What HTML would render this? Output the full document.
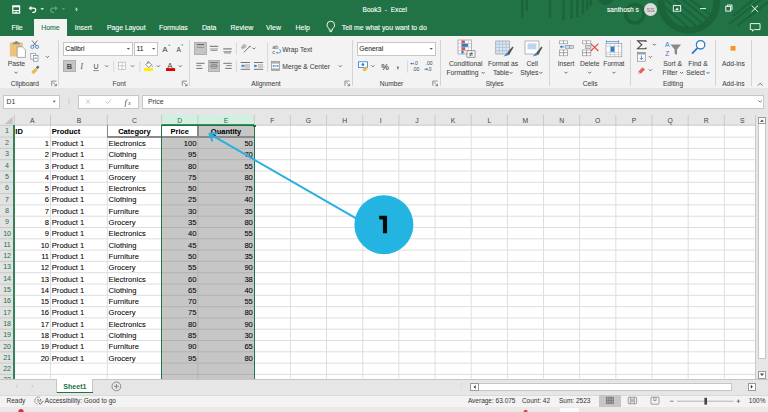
<!DOCTYPE html>
<html><head><meta charset="utf-8">
<style>
*{margin:0;padding:0;box-sizing:border-box}
html,body{width:768px;height:412px;overflow:hidden;background:#fff;font-family:"Liberation Sans",sans-serif;color:#262626}
.a{position:absolute;white-space:nowrap}
svg{position:absolute;overflow:visible}
#title{position:absolute;left:0;top:0;width:768px;height:36px;background:#217346;overflow:hidden}
.tt{position:absolute;color:#fff;font-size:6.9px;white-space:nowrap;line-height:8px;-webkit-text-stroke:0.1px currentColor}
#ribbon{position:absolute;left:0;top:36px;width:768px;height:52px;background:#f3f3f3}
.rl{position:absolute;font-size:6.6px;color:#333;white-space:nowrap;line-height:8px;-webkit-text-stroke:0.05px currentColor}
.sep{position:absolute;top:40px;width:1px;height:46px;background:#d4d4d4}
#fbar{position:absolute;left:0;top:88px;width:768px;height:27px;background:#e6e6e6}
#grid{position:absolute;left:0;top:0;width:768px;height:412px;overflow:hidden}
#tabs{position:absolute;left:0;top:379px;width:768px;height:16px;background:#e6e6e6}
#status{position:absolute;left:0;top:395px;width:768px;height:12px;background:#f3f3f3}
#task{position:absolute;left:0;top:407px;width:768px;height:5px;background:#efe9e7}
.c{position:absolute;font-size:7.6px;color:#000;white-space:nowrap;line-height:11px;-webkit-text-stroke:0.06px #000}
.st{position:absolute;font-size:6.5px;color:#333;white-space:nowrap;line-height:8px}
</style></head><body>
<div id="title">
<svg style="left:0;top:0" width="768" height="36">
<g fill="none" stroke="#1b633a">
<circle cx="688.8" cy="2.5" r="27.8" stroke-width="6.8"/>
<circle cx="634.8" cy="13.7" r="9.2" stroke-width="3.6"/>
</g>
<circle cx="605.7" cy="-3" r="8" fill="#1b633a"/>
<g stroke="#1b633a" stroke-width="2.2">
<line x1="522.3" y1="0" x2="522.3" y2="18"/><line x1="526.8" y1="0" x2="526.8" y2="11"/>
<line x1="550" y1="0" x2="550" y2="18"/><line x1="563.5" y1="0" x2="563.5" y2="20"/>
<line x1="571.5" y1="0" x2="571.5" y2="19"/><line x1="577.3" y1="0" x2="577.3" y2="17"/>
<line x1="583" y1="0" x2="583" y2="14"/><line x1="587.3" y1="0" x2="587.3" y2="10"/><line x1="590.8" y1="0" x2="590.8" y2="6"/>
</g>
<g stroke="#1b633a" stroke-width="2">
<line x1="729" y1="24" x2="768" y2="-6"/><line x1="737" y1="26" x2="776" y2="-4"/><line x1="733" y1="16" x2="760" y2="-6"/>
<line x1="661" y1="4" x2="689" y2="28"/><line x1="666" y1="0" x2="696" y2="26"/><line x1="671" y1="-3" x2="702" y2="23"/><line x1="677" y1="-5" x2="708" y2="20"/><line x1="683" y1="-6" x2="712" y2="16"/>
</g>
</svg>
<svg style="left:0;top:0" width="120" height="20">
<g fill="none" stroke="#fff" stroke-width="1.2">
<rect x="12.8" y="6" width="6.8" height="7.1"/>
<path d="M13.4 10.6 H19"/>
</g>
<rect x="12.8" y="5.6" width="6.8" height="1.7" fill="#fff"/>
<rect x="15.2" y="11.8" width="2" height="1.6" fill="#fff"/>
<g fill="none" stroke="#fff" stroke-width="1.3" stroke-linecap="round">
<path d="M30.4 8.2 H33.6 A2.1 2.1 0 0 1 33.6 12.4 H32.8"/>
</g>
<path d="M28.6 8.2 L31.4 5.9 V10.5 Z" fill="#fff"/>
<path d="M40.4 8.3 H44 L42.2 9.9 Z" fill="#fff"/>
<g fill="none" stroke="#64a07d" stroke-width="1.2" stroke-linecap="round">
<path d="M56 8.2 H52.8 A2.1 2.1 0 0 0 52.8 12.4 H53.6"/>
</g>
<path d="M57.8 8.2 L55 5.9 V10.5 Z" fill="#64a07d"/>
<path d="M61.6 8.3 H65.2 L63.4 9.9 Z" fill="#64a07d"/>
<rect x="75.7" y="7.8" width="1.5" height="0.9" fill="#fff"/>
<path d="M75 9.6 H78 L76.5 11.1 Z" fill="#fff"/>
</svg>
<div class="tt" style="left:362.5px;top:6.4px;font-size:6.6px">Book3&nbsp; -&nbsp; Excel</div>
<div class="tt" style="left:607px;top:6.3px;font-size:6.6px">santhosh s</div>
<div class="a" style="left:644.1px;top:2.8px;width:13px;height:13px;border-radius:50%;background:#dcdcdc;color:#7a7a7a;font-size:6.2px;line-height:13px;text-align:center">SS</div>
<svg style="left:0;top:0" width="768" height="36">
<g fill="none" stroke="#fff" stroke-width="0.9">
<rect x="673.3" y="5.6" width="7.4" height="5.6"/>
<line x1="700" y1="8.6" x2="706" y2="8.6"/>
<rect x="725.8" y="6.3" width="4.8" height="4.8"/>
<path d="M727.2 6.3 V5 H732 V9.8 H730.6"/>
<line x1="751.6" y1="5.5" x2="758" y2="11.9"/><line x1="758" y1="5.5" x2="751.6" y2="11.9"/>
<path d="M750.3 23.6 H760 V29.6 H754.2 L752.5 31.2 V29.6 H750.3 Z"/>
</g>
<path d="M675.3 10 L677 7.6 L678.7 10 Z" fill="#fff"/>
</svg>
<div class="a" style="left:34.4px;top:19px;width:32.8px;height:17px;background:#f3f3f3"></div>
<div class="tt" style="left:11.5px;top:24.2px;color:#fff">File</div>
<div class="tt" style="left:41.2px;top:24.2px;color:#217346">Home</div>
<div class="tt" style="left:74.8px;top:24.2px;color:#fff">Insert</div>
<div class="tt" style="left:106.9px;top:24.2px;color:#fff">Page Layout</div>
<div class="tt" style="left:159px;top:24.2px;color:#fff">Formulas</div>
<div class="tt" style="left:201.9px;top:24.2px;color:#fff">Data</div>
<div class="tt" style="left:230.6px;top:24.2px;color:#fff">Review</div>
<div class="tt" style="left:266.1px;top:24.2px;color:#fff">View</div>
<div class="tt" style="left:295.6px;top:24.2px;color:#fff">Help</div>
<div class="tt" style="left:341.7px;top:24.2px;color:#fff">Tell me what you want to do</div>
<svg style="left:0;top:0" width="768" height="36">
<g fill="none" stroke="#fff" stroke-width="0.9">
<path d="M329.2 30.2 V28.6 C327.6 27.6 327 26.4 327 25 A3.8 3.8 0 0 1 334.6 25 C334.6 26.4 334 27.6 332.4 28.6 V30.2 Z"/>
<line x1="329.6" y1="31.6" x2="332" y2="31.6"/>
</g></svg>
</div><div id="ribbon"></div><div id="ribbon"></div>
<div class="sep" style="left:58px"></div>
<div class="sep" style="left:189px"></div>
<div class="sep" style="left:352px"></div>
<div class="sep" style="left:440px"></div>
<div class="sep" style="left:549px"></div>
<div class="sep" style="left:630px"></div>
<div class="sep" style="left:715px"></div>
<div class="sep" style="left:751px"></div>
<div class="rl" style="left:-5.2px;top:79.8px;width:60px;text-align:center;font-size:6.6px;color:#444">Clipboard</div>
<div class="rl" style="left:89.2px;top:79.8px;width:60px;text-align:center;font-size:6.6px;color:#444">Font</div>
<div class="rl" style="left:236px;top:79.8px;width:60px;text-align:center;font-size:6.6px;color:#444">Alignment</div>
<div class="rl" style="left:361.6px;top:79.8px;width:60px;text-align:center;font-size:6.6px;color:#444">Number</div>
<div class="rl" style="left:464.7px;top:79.8px;width:60px;text-align:center;font-size:6.6px;color:#444">Styles</div>
<div class="rl" style="left:560.2px;top:79.8px;width:60px;text-align:center;font-size:6.6px;color:#444">Cells</div>
<div class="rl" style="left:643px;top:79.8px;width:60px;text-align:center;font-size:6.6px;color:#444">Editing</div>
<div class="rl" style="left:703.4px;top:79.8px;width:60px;text-align:center;font-size:6.6px;color:#444">Add-ins</div>
<div class="a" style="left:63.2px;top:42.2px;width:69.4px;height:13.4px;background:#fff;border:1px solid #c6c6c6"></div>
<div class="a" style="left:134.3px;top:42.2px;width:23.6px;height:13.4px;background:#fff;border:1px solid #c6c6c6"></div>
<div class="a" style="left:357.3px;top:42.2px;width:78.4px;height:13.4px;background:#fff;border:1px solid #c6c6c6"></div>
<div class="rl" style="left:65.3px;top:44.8px;font-size:6.8px;color:#262626">Calibri</div>
<div class="rl" style="left:136.4px;top:44.8px;font-size:6.8px;color:#262626">11</div>
<div class="rl" style="left:359.2px;top:44.8px;font-size:6.8px;color:#262626">General</div>
<div class="a" style="left:63.2px;top:59.7px;width:12.5px;height:12.8px;background:#c5c5c5;border:1px solid #b0b0b0"></div>
<div class="a" style="left:194.1px;top:42.4px;width:12.5px;height:12.8px;background:#c5c5c5;border:1px solid #b0b0b0"></div>
<div class="a" style="left:207.8px;top:59.7px;width:12.5px;height:12.8px;background:#c5c5c5;border:1px solid #b0b0b0"></div>
<div class="rl" style="left:-13.6px;top:59.8px;width:60px;text-align:center;font-size:6.8px;color:#444">Paste</div>
<div class="rl" style="left:282.3px;top:46px;font-size:6.7px;color:#444">Wrap Text</div>
<div class="rl" style="left:282.3px;top:63.2px;font-size:6.75px;color:#444">Merge &amp; Center</div>
<div class="rl" style="left:435.7px;top:59.7px;width:60px;text-align:center;font-size:6.7px;color:#444">Conditional</div>
<div class="rl" style="left:446.4px;top:68.6px;font-size:6.7px;color:#444">Formatting</div>
<div class="rl" style="left:473.1px;top:59.7px;width:60px;text-align:center;font-size:6.7px;color:#444">Format as</div>
<div class="rl" style="left:492.9px;top:68.6px;font-size:6.7px;color:#444">Table</div>
<div class="rl" style="left:502.2px;top:59.7px;width:60px;text-align:center;font-size:6.7px;color:#444">Cell</div>
<div class="rl" style="left:520.2px;top:68.6px;font-size:6.7px;color:#444">Styles</div>
<div class="rl" style="left:642.6px;top:59.7px;width:60px;text-align:center;font-size:6.7px;color:#444">Sort &amp;</div>
<div class="rl" style="left:662.6px;top:68.6px;font-size:6.7px;color:#444">Filter</div>
<div class="rl" style="left:668px;top:59.7px;width:60px;text-align:center;font-size:6.7px;color:#444">Find &amp;</div>
<div class="rl" style="left:686.3px;top:68.6px;font-size:6.7px;color:#444">Select</div>
<div class="rl" style="left:536px;top:59.7px;width:60px;text-align:center;font-size:6.7px;color:#444">Insert</div>
<div class="rl" style="left:559.7px;top:59.7px;width:60px;text-align:center;font-size:6.7px;color:#444">Delete</div>
<div class="rl" style="left:583.9px;top:59.7px;width:60px;text-align:center;font-size:6.7px;color:#444">Format</div>
<div class="rl" style="left:703.4px;top:59.7px;width:60px;text-align:center;font-size:6.7px;color:#444">Add-ins</div>
<svg style="left:0;top:0" width="768" height="90"><rect x="9.8" y="42.4" width="13" height="14" rx="0.5" fill="#efc27c"/><path d="M12.8 44.2 V42.6 H14.6 A1.7 1.7 0 0 1 18 42.6 H19.8 V44.2 Z" fill="#8a8a8a"/><path d="M17.2 46.8 H22.4 L25.4 49.8 V57.4 H17.2 Z" fill="#fff" stroke="#777" stroke-width="0.6"/><path d="M14.6 71.8 L16.1 73.3 L17.6 71.8" fill="none" stroke="#555" stroke-width="0.85"/><path d="M32 40.5 L36.6 46.2 M37.4 40.5 L32.8 46.2" stroke="#555" stroke-width="0.8" fill="none"/><circle cx="32.3" cy="46.9" r="1.6" fill="none" stroke="#2b7cd3" stroke-width="0.8"/><circle cx="37.1" cy="46.9" r="1.6" fill="none" stroke="#2b7cd3" stroke-width="0.8"/><rect x="30.8" y="53.4" width="4.6" height="5.8" fill="#fff" stroke="#777" stroke-width="0.6"/><rect x="33.4" y="55.4" width="4.6" height="5.8" fill="#fff" stroke="#777" stroke-width="0.6"/><path d="M34.3 58.2 H37" stroke="#2b7cd3" stroke-width="0.8"/><path d="M45.9 56.1 L47.4 57.6 L48.9 56.1" fill="none" stroke="#555" stroke-width="0.85"/><path d="M31.2 72 L35.2 68 L37.5 70.3 L33.5 74.3 Z" fill="#e8b84a"/><path d="M35.8 67.4 L38 65.6 L39.4 67 L37.6 69.2 Z" fill="#666"/><path d="M51.7 85.8 V81.1 H56.4" fill="none" stroke="#666" stroke-width="0.7"/><path d="M53 82.4 L56.4 85.8 M56.4 83.8 V85.8 H54.4" fill="none" stroke="#666" stroke-width="0.7"/><path d="M126.8 47.9 L130 47.9 L128.4 49.7 Z" fill="#555"/><path d="M152 47.9 L155.2 47.9 L153.6 49.7 Z" fill="#555"/><text x="162.2" y="52.2" font-size="8" fill="#444" font-family="Liberation Sans">A</text><path d="M168 45.6 L169.2 44.2 L170.4 45.6 Z" fill="#2b7cd3"/><text x="176.4" y="52.2" font-size="6.6" fill="#444" font-family="Liberation Sans">A</text><path d="M181 44.4 L182.2 45.8 L183.4 44.4 Z" fill="#2b7cd3"/><text x="66.8" y="69" font-size="7.4" font-weight="bold" fill="#444" font-family="Liberation Sans">B</text><text x="80.5" y="69" font-size="7.4" font-style="italic" fill="#444" font-family="Liberation Serif">I</text><text x="93.5" y="68.5" font-size="7" fill="#444" font-family="Liberation Sans">U</text><line x1="93.3" y1="70.6" x2="98.8" y2="70.6" stroke="#444" stroke-width="0.6"/><path d="M105.1 65.4 L106.6 66.9 L108.1 65.4" fill="none" stroke="#555" stroke-width="0.85"/><line x1="113.7" y1="61" x2="113.7" y2="72" stroke="#d0d0d0" stroke-width="0.8"/><line x1="139.8" y1="61" x2="139.8" y2="72" stroke="#d0d0d0" stroke-width="0.8"/><rect x="118.6" y="62.2" width="7" height="7.2" fill="#fff" stroke="#b4b4b4" stroke-width="0.7"/><path d="M122.1 62.2 V69.4 M118.6 65.8 H125.6" stroke="#b4b4b4" stroke-width="0.7"/><path d="M131 65.4 L132.5 66.9 L134 65.4" fill="none" stroke="#555" stroke-width="0.85"/><path d="M145.8 64.6 L148.6 61.8 L151.6 64.8 L148.8 67.6 Z" fill="#fff" stroke="#555" stroke-width="0.7"/><path d="M148 61.2 V64" stroke="#555" stroke-width="0.6"/><path d="M151.8 65 Q153.2 66.2 152.6 67.2 Q151.6 66.6 151.8 65 Z" fill="#2b7cd3"/><rect x="143.9" y="68.1" width="9" height="2.9" fill="#ffee00"/><path d="M156.9 65.4 L158.4 66.9 L159.9 65.4" fill="none" stroke="#555" stroke-width="0.85"/><text x="167.6" y="67.8" font-size="7.4" fill="#444" font-family="Liberation Sans">A</text><rect x="166" y="68.1" width="9.1" height="2.9" fill="#e00000"/><path d="M178.9 65.4 L180.4 66.9 L181.9 65.4" fill="none" stroke="#555" stroke-width="0.85"/><path d="M182.3 85.8 V81.1 H187" fill="none" stroke="#666" stroke-width="0.7"/><path d="M183.6 82.4 L187 85.8 M187 83.8 V85.8 H185" fill="none" stroke="#666" stroke-width="0.7"/><g stroke-width="0.9" fill="none"><path d="M196.8 44.6 H204.2" stroke="#555"/><path d="M196.8 47.4 H204.2" stroke="#8a8a8a"/><path d="M209.8 46.3 H218.1" stroke="#555"/><path d="M209.8 48.9 H218.1" stroke="#9a9a9a"/><path d="M210.6 50.3 H217.3" stroke="#777"/><path d="M223.3 48.9 H231.7" stroke="#555"/><path d="M223.3 51.5 H231.7" stroke="#9a9a9a"/><path d="M224 52.9 H231" stroke="#777"/><path d="M196.3 63.3 H204.6" stroke="#666"/><path d="M196.3 65.6 H201.5" stroke="#777"/><path d="M196.3 68.4 H202.6" stroke="#666"/><path d="M209.8 62.6 H218.1" stroke="#666"/><path d="M210.8 64.4 H217.1" stroke="#888"/><path d="M209.8 66.2 H218.1" stroke="#666"/><path d="M210.8 68.2 H217.1" stroke="#888"/><path d="M223.3 63.3 H231.7" stroke="#666"/><path d="M226.3 65.6 H231.7" stroke="#777"/><path d="M225 68.4 H231.7" stroke="#666"/><path d="M240.6 62.5 H250" stroke="#666"/><path d="M244.8 65 H250 M244.8 67 H250" stroke="#999"/><path d="M240.6 69.3 H250" stroke="#666"/><path d="M253.8 62.5 H263.2" stroke="#666"/><path d="M258 65 H263.2 M258 67 H263.2" stroke="#999"/><path d="M253.8 69.3 H263.2" stroke="#666"/></g><path d="M240.8 65.9 L243.4 64.2 V67.6 Z" fill="#2b7cd3"/><path d="M243 65.9 H245" stroke="#2b7cd3" stroke-width="1"/><path d="M257 65.9 L254.4 64.2 V67.6 Z" fill="#2b7cd3"/><path d="M254.4 65.9 H257" stroke="#2b7cd3" stroke-width="1"/><line x1="236.4" y1="42.7" x2="236.4" y2="54.7" stroke="#d0d0d0" stroke-width="0.8"/><line x1="236.4" y1="60.4" x2="236.4" y2="71.9" stroke="#d0d0d0" stroke-width="0.8"/><line x1="267.6" y1="42.5" x2="267.6" y2="72.5" stroke="#d0d0d0" stroke-width="0.8"/><text x="0" y="0" font-size="5.2" fill="#555" font-family="Liberation Sans" transform="translate(242.2 49.8) rotate(-40)">ab</text><path d="M243.8 52.4 L250.2 46" stroke="#555" stroke-width="0.8"/><path d="M250.4 45.8 L248.6 46.2 L250 47.6 Z" fill="#555"/><path d="M252.3 47.6 L253.8 49.1 L255.3 47.6" fill="none" stroke="#555" stroke-width="0.85"/><g font-family="Liberation Sans" font-size="5.6" fill="#555"><text x="272.2" y="48.6">ab</text><text x="272.2" y="53.6">c</text></g><path d="M279.2 49.6 A1.6 1.6 0 0 1 279.2 52.8 H276.6" fill="none" stroke="#2b7cd3" stroke-width="0.7"/><path d="M276 52.8 L277.4 51.8 V53.8 Z" fill="#2b7cd3"/><rect x="271.6" y="61.6" width="8" height="8.8" fill="#fff" stroke="#888" stroke-width="0.7"/><rect x="271.6" y="61.6" width="8" height="2" fill="#aaa"/><rect x="271.6" y="68.4" width="8" height="2" fill="#aaa"/><path d="M272.8 66 H278.4" stroke="#2b7cd3" stroke-width="0.8"/><path d="M272.4 66 L273.8 65 V67 Z M278.8 66 L277.4 65 V67 Z" fill="#2b7cd3"/><path d="M338.8 65.4 L340.3 66.9 L341.8 65.4" fill="none" stroke="#555" stroke-width="0.85"/><path d="M344.9 85.8 V81.1 H349.6" fill="none" stroke="#666" stroke-width="0.7"/><path d="M346.2 82.4 L349.6 85.8 M349.6 83.8 V85.8 H347.6" fill="none" stroke="#666" stroke-width="0.7"/><path d="M429.6 47.9 L432.8 47.9 L431.2 49.7 Z" fill="#555"/><rect x="358.4" y="61.8" width="9" height="5.6" fill="#fff" stroke="#2b7cd3" stroke-width="0.8"/><circle cx="362.9" cy="64.6" r="1.4" fill="#2b7cd3"/><circle cx="365.6" cy="68.4" r="1.8" fill="#e8b84a"/><circle cx="364.4" cy="69.6" r="1.6" fill="#e8b84a"/><path d="M371.3 65.4 L372.8 66.9 L374.3 65.4" fill="none" stroke="#555" stroke-width="0.85"/><text x="381.2" y="69.6" font-size="8.6" fill="#444" font-family="Liberation Sans" stroke="#444" stroke-width="0.15">%</text><text x="396.6" y="67.6" font-size="9" font-weight="bold" fill="#444" font-family="Liberation Sans">,</text><line x1="407.4" y1="60.5" x2="407.4" y2="72.5" stroke="#d0d0d0" stroke-width="0.8"/><g font-family="Liberation Sans" font-size="5" fill="#444"><text x="413.6" y="65.2">.0</text><text x="412.4" y="70.8">.00</text><text x="425.6" y="65.2">.00</text><text x="427.4" y="70.8">.0</text></g><path d="M410.6 63.6 H414" stroke="#2b7cd3" stroke-width="0.9"/><path d="M410.4 63.6 L412 62.4 V64.8 Z" fill="#2b7cd3"/><path d="M424.4 69.2 H427.6" stroke="#2b7cd3" stroke-width="0.9"/><path d="M428 69.2 L426.4 68 V70.4 Z" fill="#2b7cd3"/><path d="M432.8 85.8 V81.1 H437.5" fill="none" stroke="#666" stroke-width="0.7"/><path d="M434.1 82.4 L437.5 85.8 M437.5 83.8 V85.8 H435.5" fill="none" stroke="#666" stroke-width="0.7"/><rect x="458" y="40" width="13.6" height="14" fill="#fff" stroke="#888" stroke-width="0.6"/><path d="M458 43.5 H471.6 M458 47 H471.6 M458 50.5 H471.6 M461.5 40 V54 M465 40 V54 M468.3 40 V54" stroke="#aaa" stroke-width="0.5"/><rect x="461.6" y="40.4" width="3.2" height="3" fill="#e8524a"/><rect x="461.6" y="43.8" width="6.4" height="3" fill="#2b7cd3"/><rect x="461.6" y="47.2" width="3.6" height="3" fill="#e8524a"/><rect x="461.6" y="50.6" width="2" height="3" fill="#2b7cd3"/><rect x="467" y="50.8" width="8" height="6.4" fill="#fff" stroke="#555" stroke-width="0.6"/><path d="M469 53.4 H473 M469 55 H473 M470 56.4 L472 52" stroke="#333" stroke-width="0.6"/><rect x="495.8" y="41" width="13.6" height="13" fill="#dbe8f5" stroke="#888" stroke-width="0.6"/><path d="M495.8 44.2 H509.4 M495.8 47.4 H509.4 M495.8 50.6 H509.4 M499.2 41 V54 M502.6 41 V54 M506 41 V54" stroke="#9ab" stroke-width="0.5"/><path d="M503.5 56.5 L507 53 L509 55 Z" fill="#2b7cd3"/><path d="M507 53 L512.5 46.5 L513.5 47.5 L509 55 Z" fill="#555"/><rect x="525" y="41" width="14" height="13" fill="#fff" stroke="#888" stroke-width="0.6"/><rect x="527.5" y="43.4" width="9" height="6" fill="#bcd6ef"/><path d="M532.5 56.5 L536 53 L538 55 Z" fill="#2b7cd3"/><path d="M536 53 L541.5 46.5 L542.5 47.5 L538 55 Z" fill="#555"/><path d="M481.7 72 L483.2 73.5 L484.7 72" fill="none" stroke="#555" stroke-width="0.85"/><path d="M509.5 72 L511 73.5 L512.5 72" fill="none" stroke="#555" stroke-width="0.85"/><path d="M539.3 72 L540.8 73.5 L542.3 72" fill="none" stroke="#555" stroke-width="0.85"/><path d="M564.5 71.8 L566 73.3 L567.5 71.8" fill="none" stroke="#555" stroke-width="0.85"/><path d="M588.2 71.8 L589.7 73.3 L591.2 71.8" fill="none" stroke="#555" stroke-width="0.85"/><path d="M612.4 71.8 L613.9 73.3 L615.4 71.8" fill="none" stroke="#555" stroke-width="0.85"/><path d="M680.1 72 L681.6 73.5 L683.1 72" fill="none" stroke="#555" stroke-width="0.85"/><path d="M706.5 72 L708 73.5 L709.5 72" fill="none" stroke="#555" stroke-width="0.85"/><g fill="#fff" stroke="#8a8a8a" stroke-width="0.6"><rect x="559.3" y="40.9" width="4.2" height="2.9"/><rect x="563.5" y="40.9" width="4.2" height="2.9"/><rect x="559.3" y="50" width="4.2" height="2.9"/><rect x="563.5" y="50" width="4.2" height="2.9"/><rect x="559.3" y="52.9" width="4.2" height="2.9"/><rect x="563.5" y="52.9" width="4.2" height="2.9"/></g><g fill="#c8dcf0" stroke="#8a8a8a" stroke-width="0.6"><rect x="565.2" y="45.4" width="4.2" height="2.9"/><rect x="569.4" y="45.4" width="4.2" height="2.9"/></g><path d="M561.4 46.85 H564.2" stroke="#2b7cd3" stroke-width="1"/><path d="M559.6 46.85 L561.8 45.2 V48.5 Z" fill="#2b7cd3"/><g fill="#fff" stroke="#8a8a8a" stroke-width="0.6"><rect x="582.4" y="40.9" width="4.2" height="2.9"/><rect x="586.6" y="40.9" width="4.2" height="2.9"/><rect x="582.4" y="50" width="4.2" height="2.9"/><rect x="586.6" y="50" width="4.2" height="2.9"/><rect x="582.4" y="52.9" width="4.2" height="2.9"/><rect x="586.6" y="52.9" width="4.2" height="2.9"/></g><rect x="585.6" y="45.4" width="5.4" height="2.9" fill="#c8dcf0" stroke="#8a8a8a" stroke-width="0.6"/><path d="M590.8 43.6 L598.4 51 M598.4 43.6 L590.8 51" stroke="#e04a3f" stroke-width="1.1"/><rect x="606" y="43.6" width="15.8" height="13.2" fill="#fff" stroke="#8a8a8a" stroke-width="0.6"/><path d="M606 46.2 H621.8 M606 52.4 H621.8 M606 54.6 H621.8 M610.2 43.6 V56.8 M614.6 43.6 V56.8 M618.4 43.6 V56.8" stroke="#aaa" stroke-width="0.5"/><rect x="610.6" y="46.6" width="3.8" height="5.2" fill="#2b7cd3"/><path d="M606.4 41.6 H618.6 M606.4 40.4 V42.8 M618.6 40.4 V42.8" stroke="#2b7cd3" stroke-width="0.7"/><path d="M646 42 V40.9 H637.6 L641.8 44.8 L637.6 48.7 H646 V47.6" fill="none" stroke="#444" stroke-width="1.1"/><path d="M652.9 43.8 L654.4 45.3 L655.9 43.8" fill="none" stroke="#555" stroke-width="0.85"/><rect x="637.6" y="52.6" width="7.6" height="8.6" fill="#fff" stroke="#777" stroke-width="0.6"/><rect x="637.6" y="52.6" width="7.6" height="1.8" fill="#999"/><path d="M641.4 55.4 V59.5 M639.6 57.8 L641.4 59.6 L643.2 57.8" fill="none" stroke="#2b7cd3" stroke-width="0.8"/><path d="M648.9 56.2 L650.4 57.7 L651.9 56.2" fill="none" stroke="#555" stroke-width="0.85"/><path d="M638.4 71.6 L642.6 67.2 L645 69.4 L640.8 73.8 Z" fill="#e8605a"/><path d="M638.4 71.6 L640.8 73.8 L639.6 74.2 L637.8 72.6 Z" fill="#f0b0a8"/><path d="M648.9 69.4 L650.4 70.9 L651.9 69.4" fill="none" stroke="#555" stroke-width="0.85"/><text x="665" y="47.4" font-size="6.8" fill="#2b7cd3" font-family="Liberation Sans">A</text><text x="665.2" y="55.6" font-size="6.8" fill="#9b4fc5" font-family="Liberation Sans">Z</text><path d="M670.5 44.6 H681 L677 49.6 V55 L674.6 53.4 V49.6 Z" fill="#888"/><circle cx="700.6" cy="44.8" r="4.2" fill="#fff" stroke="#2b7cd3" stroke-width="1.3"/><path d="M697.6 47.8 L692 53.6" stroke="#2b7cd3" stroke-width="1.8"/><rect x="730.6" y="46" width="4.9" height="4.6" fill="#f7941d"/><path d="M757.8 85.6 L760.2 83.2 L762.6 85.6" fill="none" stroke="#555" stroke-width="0.8"/></svg>
<div id="fbar"></div><div class="a" style="left:0px;top:115px;width:768px;height:263.6px;background:#fff"></div>
<div class="a" style="left:0px;top:115px;width:755.3px;height:10.2px;background:#e6e6e6"></div>
<div class="a" style="left:161.6px;top:115px;width:92.64px;height:10.2px;background:#d3efdf"></div>
<div class="a" style="left:0px;top:125.2px;width:14px;height:253.4px;background:#e2e2e2"></div>
<div class="a" style="left:161.6px;top:125.2px;width:92.64px;height:253.4px;background:#c6c6c6"></div>
<div class="a" style="left:161.6px;top:125.2px;width:36.3px;height:11.91px;background:#fff"></div>
<svg style="left:0;top:0" width="768" height="412"><path d="M14 137.11 H161.6 M254.24 137.11 H755.3 M14 148.41 H161.6 M254.24 148.41 H755.3 M14 159.71 H161.6 M254.24 159.71 H755.3 M14 171.01 H161.6 M254.24 171.01 H755.3 M14 182.31 H161.6 M254.24 182.31 H755.3 M14 193.61 H161.6 M254.24 193.61 H755.3 M14 204.91 H161.6 M254.24 204.91 H755.3 M14 216.21 H161.6 M254.24 216.21 H755.3 M14 227.51 H161.6 M254.24 227.51 H755.3 M14 238.81 H161.6 M254.24 238.81 H755.3 M14 250.11 H161.6 M254.24 250.11 H755.3 M14 261.41 H161.6 M254.24 261.41 H755.3 M14 272.71 H161.6 M254.24 272.71 H755.3 M14 284.01 H161.6 M254.24 284.01 H755.3 M14 295.31 H161.6 M254.24 295.31 H755.3 M14 306.61 H161.6 M254.24 306.61 H755.3 M14 317.91 H161.6 M254.24 317.91 H755.3 M14 329.21 H161.6 M254.24 329.21 H755.3 M14 340.51 H161.6 M254.24 340.51 H755.3 M14 351.81 H161.6 M254.24 351.81 H755.3 M14 363.11 H161.6 M254.24 363.11 H755.3 M14 374.41 H161.6 M254.24 374.41 H755.3 M50.5 125.2 V378.6 M107.3 125.2 V378.6 M161.6 125.2 V378.6 M254.24 125.2 V378.6 M290.4 125.2 V378.6 M326.56 125.2 V378.6 M362.72 125.2 V378.6 M398.88 125.2 V378.6 M435.04 125.2 V378.6 M471.2 125.2 V378.6 M507.36 125.2 V378.6 M543.52 125.2 V378.6 M579.68 125.2 V378.6 M615.84 125.2 V378.6 M652 125.2 V378.6 M688.16 125.2 V378.6 M724.32 125.2 V378.6" stroke="#dedede" stroke-width="1" fill="none"/><path d="M161.6 137.11 H254.24 M161.6 148.41 H254.24 M161.6 159.71 H254.24 M161.6 171.01 H254.24 M161.6 182.31 H254.24 M161.6 193.61 H254.24 M161.6 204.91 H254.24 M161.6 216.21 H254.24 M161.6 227.51 H254.24 M161.6 238.81 H254.24 M161.6 250.11 H254.24 M161.6 261.41 H254.24 M161.6 272.71 H254.24 M161.6 284.01 H254.24 M161.6 295.31 H254.24 M161.6 306.61 H254.24 M161.6 317.91 H254.24 M161.6 329.21 H254.24 M161.6 340.51 H254.24 M161.6 351.81 H254.24 M161.6 363.11 H254.24 M161.6 374.41 H254.24 M197.9 125.2 V378.6" stroke="#b2b2b2" stroke-width="1" fill="none"/><path d="M0 137.11 H14 M0 148.41 H14 M0 159.71 H14 M0 171.01 H14 M0 182.31 H14 M0 193.61 H14 M0 204.91 H14 M0 216.21 H14 M0 227.51 H14 M0 238.81 H14 M0 250.11 H14 M0 261.41 H14 M0 272.71 H14 M0 284.01 H14 M0 295.31 H14 M0 306.61 H14 M0 317.91 H14 M0 329.21 H14 M0 340.51 H14 M0 351.81 H14 M0 363.11 H14 M0 374.41 H14 M50.5 115 V125.2 M107.3 115 V125.2 M161.6 115 V125.2 M197.9 115 V125.2 M254.24 115 V125.2 M290.4 115 V125.2 M326.56 115 V125.2 M362.72 115 V125.2 M398.88 115 V125.2 M435.04 115 V125.2 M471.2 115 V125.2 M507.36 115 V125.2 M543.52 115 V125.2 M579.68 115 V125.2 M615.84 115 V125.2 M652 115 V125.2 M688.16 115 V125.2 M724.32 115 V125.2 M0 125.2 H161.6 M254.24 125.2 H755.3 M14.3 115 V125.2" stroke="#c9c9c9" stroke-width="1" fill="none"/><path d="M161.6 124.7 H254.24" stroke="#217346" stroke-width="1"/><path d="M4.8 123.9 L12.6 123.9 L12.6 116.8 Z" fill="#c3c3c3"/></svg>
<div class="a" style="left:14px;top:115.6px;width:36.5px;height:10px;line-height:10px;text-align:center;font-size:6.8px;color:#444">A</div>
<div class="a" style="left:50.5px;top:115.6px;width:56.8px;height:10px;line-height:10px;text-align:center;font-size:6.8px;color:#444">B</div>
<div class="a" style="left:107.3px;top:115.6px;width:54.3px;height:10px;line-height:10px;text-align:center;font-size:6.8px;color:#444">C</div>
<div class="a" style="left:161.6px;top:115.6px;width:36.3px;height:10px;line-height:10px;text-align:center;font-size:6.8px;color:#217346">D</div>
<div class="a" style="left:197.9px;top:115.6px;width:56.34px;height:10px;line-height:10px;text-align:center;font-size:6.8px;color:#217346">E</div>
<div class="a" style="left:254.24px;top:115.6px;width:36.16px;height:10px;line-height:10px;text-align:center;font-size:6.8px;color:#444">F</div>
<div class="a" style="left:290.4px;top:115.6px;width:36.16px;height:10px;line-height:10px;text-align:center;font-size:6.8px;color:#444">G</div>
<div class="a" style="left:326.56px;top:115.6px;width:36.16px;height:10px;line-height:10px;text-align:center;font-size:6.8px;color:#444">H</div>
<div class="a" style="left:362.72px;top:115.6px;width:36.16px;height:10px;line-height:10px;text-align:center;font-size:6.8px;color:#444">I</div>
<div class="a" style="left:398.88px;top:115.6px;width:36.16px;height:10px;line-height:10px;text-align:center;font-size:6.8px;color:#444">J</div>
<div class="a" style="left:435.04px;top:115.6px;width:36.16px;height:10px;line-height:10px;text-align:center;font-size:6.8px;color:#444">K</div>
<div class="a" style="left:471.2px;top:115.6px;width:36.16px;height:10px;line-height:10px;text-align:center;font-size:6.8px;color:#444">L</div>
<div class="a" style="left:507.36px;top:115.6px;width:36.16px;height:10px;line-height:10px;text-align:center;font-size:6.8px;color:#444">M</div>
<div class="a" style="left:543.52px;top:115.6px;width:36.16px;height:10px;line-height:10px;text-align:center;font-size:6.8px;color:#444">N</div>
<div class="a" style="left:579.68px;top:115.6px;width:36.16px;height:10px;line-height:10px;text-align:center;font-size:6.8px;color:#444">O</div>
<div class="a" style="left:615.84px;top:115.6px;width:36.16px;height:10px;line-height:10px;text-align:center;font-size:6.8px;color:#444">P</div>
<div class="a" style="left:652px;top:115.6px;width:36.16px;height:10px;line-height:10px;text-align:center;font-size:6.8px;color:#444">Q</div>
<div class="a" style="left:688.16px;top:115.6px;width:36.16px;height:10px;line-height:10px;text-align:center;font-size:6.8px;color:#444">R</div>
<div class="a" style="left:724.32px;top:115.6px;width:36.16px;height:10px;line-height:10px;text-align:center;font-size:6.8px;color:#444">S</div>
<div class="a" style="left:0.6px;top:126.2px;width:13px;height:11.91px;line-height:11.91px;text-align:center;font-size:7.1px;color:#217346">1</div>
<div class="a" style="left:0.6px;top:138.11px;width:13px;height:11.3px;line-height:11.3px;text-align:center;font-size:7.1px;color:#217346">2</div>
<div class="a" style="left:0.6px;top:149.41px;width:13px;height:11.3px;line-height:11.3px;text-align:center;font-size:7.1px;color:#217346">3</div>
<div class="a" style="left:0.6px;top:160.71px;width:13px;height:11.3px;line-height:11.3px;text-align:center;font-size:7.1px;color:#217346">4</div>
<div class="a" style="left:0.6px;top:172.01px;width:13px;height:11.3px;line-height:11.3px;text-align:center;font-size:7.1px;color:#217346">5</div>
<div class="a" style="left:0.6px;top:183.31px;width:13px;height:11.3px;line-height:11.3px;text-align:center;font-size:7.1px;color:#217346">6</div>
<div class="a" style="left:0.6px;top:194.61px;width:13px;height:11.3px;line-height:11.3px;text-align:center;font-size:7.1px;color:#217346">7</div>
<div class="a" style="left:0.6px;top:205.91px;width:13px;height:11.3px;line-height:11.3px;text-align:center;font-size:7.1px;color:#217346">8</div>
<div class="a" style="left:0.6px;top:217.21px;width:13px;height:11.3px;line-height:11.3px;text-align:center;font-size:7.1px;color:#217346">9</div>
<div class="a" style="left:0.6px;top:228.51px;width:13px;height:11.3px;line-height:11.3px;text-align:center;font-size:7.1px;color:#217346">10</div>
<div class="a" style="left:0.6px;top:239.81px;width:13px;height:11.3px;line-height:11.3px;text-align:center;font-size:7.1px;color:#217346">11</div>
<div class="a" style="left:0.6px;top:251.11px;width:13px;height:11.3px;line-height:11.3px;text-align:center;font-size:7.1px;color:#217346">12</div>
<div class="a" style="left:0.6px;top:262.41px;width:13px;height:11.3px;line-height:11.3px;text-align:center;font-size:7.1px;color:#217346">13</div>
<div class="a" style="left:0.6px;top:273.71px;width:13px;height:11.3px;line-height:11.3px;text-align:center;font-size:7.1px;color:#217346">14</div>
<div class="a" style="left:0.6px;top:285.01px;width:13px;height:11.3px;line-height:11.3px;text-align:center;font-size:7.1px;color:#217346">15</div>
<div class="a" style="left:0.6px;top:296.31px;width:13px;height:11.3px;line-height:11.3px;text-align:center;font-size:7.1px;color:#217346">16</div>
<div class="a" style="left:0.6px;top:307.61px;width:13px;height:11.3px;line-height:11.3px;text-align:center;font-size:7.1px;color:#217346">17</div>
<div class="a" style="left:0.6px;top:318.91px;width:13px;height:11.3px;line-height:11.3px;text-align:center;font-size:7.1px;color:#217346">18</div>
<div class="a" style="left:0.6px;top:330.21px;width:13px;height:11.3px;line-height:11.3px;text-align:center;font-size:7.1px;color:#217346">19</div>
<div class="a" style="left:0.6px;top:341.51px;width:13px;height:11.3px;line-height:11.3px;text-align:center;font-size:7.1px;color:#217346">20</div>
<div class="a" style="left:0.6px;top:352.81px;width:13px;height:11.3px;line-height:11.3px;text-align:center;font-size:7.1px;color:#217346">21</div>
<div class="a" style="left:0.6px;top:364.11px;width:13px;height:11.3px;line-height:11.3px;text-align:center;font-size:7.1px;color:#217346">22</div>
<div class="a" style="left:0.6px;top:375.41px;width:13px;height:11.3px;line-height:11.3px;text-align:center;font-size:7.1px;color:#217346">23</div>
<div class="a" style="left:13.2px;top:125.2px;width:1.6px;height:253.4px;background:#348356"></div>
<div class="a" style="left:107.3px;top:136.11px;width:146.94px;height:1.4px;background:#8a8a8a"></div>
<div class="a" style="left:106.7px;top:125.2px;width:1.3px;height:11.91px;background:#8a8a8a"></div>
<div class="a" style="left:197.2px;top:125.2px;width:1.4px;height:11.91px;background:#8a8a8a"></div>
<div class="c" style="left:15.3px;top:126px;height:11.91px;line-height:11.91px;font-weight:bold;font-size:7.5px;">ID</div>
<div class="c" style="left:51.8px;top:126px;height:11.91px;line-height:11.91px;font-weight:bold;font-size:7.5px;">Product</div>
<div class="c" style="left:107.3px;width:54.3px;top:126px;height:11.91px;line-height:11.91px;text-align:center;font-weight:bold;font-size:7.5px;">Category</div>
<div class="c" style="left:161.6px;width:36.3px;top:126px;height:11.91px;line-height:11.91px;text-align:center;font-weight:bold;font-size:7.5px;">Price</div>
<div class="c" style="left:197.9px;width:56.34px;top:126px;height:11.91px;line-height:11.91px;text-align:center;font-weight:bold;font-size:7.5px;">Quantity</div>
<div class="c" style="left:14px;width:35.1px;top:137.91px;height:11.3px;line-height:11.3px;text-align:right;">1</div>
<div class="c" style="left:51.8px;top:137.91px;height:11.3px;line-height:11.3px;">Product 1</div>
<div class="c" style="left:108.6px;top:137.91px;height:11.3px;line-height:11.3px;">Electronics</div>
<div class="c" style="left:161.6px;width:34.9px;top:137.91px;height:11.3px;line-height:11.3px;text-align:right;">100</div>
<div class="c" style="left:197.9px;width:54.94px;top:137.91px;height:11.3px;line-height:11.3px;text-align:right;">50</div>
<div class="c" style="left:14px;width:35.1px;top:149.21px;height:11.3px;line-height:11.3px;text-align:right;">2</div>
<div class="c" style="left:51.8px;top:149.21px;height:11.3px;line-height:11.3px;">Product 1</div>
<div class="c" style="left:108.6px;top:149.21px;height:11.3px;line-height:11.3px;">Clothing</div>
<div class="c" style="left:161.6px;width:34.9px;top:149.21px;height:11.3px;line-height:11.3px;text-align:right;">95</div>
<div class="c" style="left:197.9px;width:54.94px;top:149.21px;height:11.3px;line-height:11.3px;text-align:right;">70</div>
<div class="c" style="left:14px;width:35.1px;top:160.51px;height:11.3px;line-height:11.3px;text-align:right;">3</div>
<div class="c" style="left:51.8px;top:160.51px;height:11.3px;line-height:11.3px;">Product 1</div>
<div class="c" style="left:108.6px;top:160.51px;height:11.3px;line-height:11.3px;">Furniture</div>
<div class="c" style="left:161.6px;width:34.9px;top:160.51px;height:11.3px;line-height:11.3px;text-align:right;">80</div>
<div class="c" style="left:197.9px;width:54.94px;top:160.51px;height:11.3px;line-height:11.3px;text-align:right;">55</div>
<div class="c" style="left:14px;width:35.1px;top:171.81px;height:11.3px;line-height:11.3px;text-align:right;">4</div>
<div class="c" style="left:51.8px;top:171.81px;height:11.3px;line-height:11.3px;">Product 1</div>
<div class="c" style="left:108.6px;top:171.81px;height:11.3px;line-height:11.3px;">Grocery</div>
<div class="c" style="left:161.6px;width:34.9px;top:171.81px;height:11.3px;line-height:11.3px;text-align:right;">75</div>
<div class="c" style="left:197.9px;width:54.94px;top:171.81px;height:11.3px;line-height:11.3px;text-align:right;">80</div>
<div class="c" style="left:14px;width:35.1px;top:183.11px;height:11.3px;line-height:11.3px;text-align:right;">5</div>
<div class="c" style="left:51.8px;top:183.11px;height:11.3px;line-height:11.3px;">Product 1</div>
<div class="c" style="left:108.6px;top:183.11px;height:11.3px;line-height:11.3px;">Electronics</div>
<div class="c" style="left:161.6px;width:34.9px;top:183.11px;height:11.3px;line-height:11.3px;text-align:right;">50</div>
<div class="c" style="left:197.9px;width:54.94px;top:183.11px;height:11.3px;line-height:11.3px;text-align:right;">75</div>
<div class="c" style="left:14px;width:35.1px;top:194.41px;height:11.3px;line-height:11.3px;text-align:right;">6</div>
<div class="c" style="left:51.8px;top:194.41px;height:11.3px;line-height:11.3px;">Product 1</div>
<div class="c" style="left:108.6px;top:194.41px;height:11.3px;line-height:11.3px;">Clothing</div>
<div class="c" style="left:161.6px;width:34.9px;top:194.41px;height:11.3px;line-height:11.3px;text-align:right;">25</div>
<div class="c" style="left:197.9px;width:54.94px;top:194.41px;height:11.3px;line-height:11.3px;text-align:right;">40</div>
<div class="c" style="left:14px;width:35.1px;top:205.71px;height:11.3px;line-height:11.3px;text-align:right;">7</div>
<div class="c" style="left:51.8px;top:205.71px;height:11.3px;line-height:11.3px;">Product 1</div>
<div class="c" style="left:108.6px;top:205.71px;height:11.3px;line-height:11.3px;">Furniture</div>
<div class="c" style="left:161.6px;width:34.9px;top:205.71px;height:11.3px;line-height:11.3px;text-align:right;">30</div>
<div class="c" style="left:197.9px;width:54.94px;top:205.71px;height:11.3px;line-height:11.3px;text-align:right;">35</div>
<div class="c" style="left:14px;width:35.1px;top:217.01px;height:11.3px;line-height:11.3px;text-align:right;">8</div>
<div class="c" style="left:51.8px;top:217.01px;height:11.3px;line-height:11.3px;">Product 1</div>
<div class="c" style="left:108.6px;top:217.01px;height:11.3px;line-height:11.3px;">Grocery</div>
<div class="c" style="left:161.6px;width:34.9px;top:217.01px;height:11.3px;line-height:11.3px;text-align:right;">35</div>
<div class="c" style="left:197.9px;width:54.94px;top:217.01px;height:11.3px;line-height:11.3px;text-align:right;">80</div>
<div class="c" style="left:14px;width:35.1px;top:228.31px;height:11.3px;line-height:11.3px;text-align:right;">9</div>
<div class="c" style="left:51.8px;top:228.31px;height:11.3px;line-height:11.3px;">Product 1</div>
<div class="c" style="left:108.6px;top:228.31px;height:11.3px;line-height:11.3px;">Electronics</div>
<div class="c" style="left:161.6px;width:34.9px;top:228.31px;height:11.3px;line-height:11.3px;text-align:right;">40</div>
<div class="c" style="left:197.9px;width:54.94px;top:228.31px;height:11.3px;line-height:11.3px;text-align:right;">55</div>
<div class="c" style="left:14px;width:35.1px;top:239.61px;height:11.3px;line-height:11.3px;text-align:right;">10</div>
<div class="c" style="left:51.8px;top:239.61px;height:11.3px;line-height:11.3px;">Product 1</div>
<div class="c" style="left:108.6px;top:239.61px;height:11.3px;line-height:11.3px;">Clothing</div>
<div class="c" style="left:161.6px;width:34.9px;top:239.61px;height:11.3px;line-height:11.3px;text-align:right;">45</div>
<div class="c" style="left:197.9px;width:54.94px;top:239.61px;height:11.3px;line-height:11.3px;text-align:right;">80</div>
<div class="c" style="left:14px;width:35.1px;top:250.91px;height:11.3px;line-height:11.3px;text-align:right;">11</div>
<div class="c" style="left:51.8px;top:250.91px;height:11.3px;line-height:11.3px;">Product 1</div>
<div class="c" style="left:108.6px;top:250.91px;height:11.3px;line-height:11.3px;">Furniture</div>
<div class="c" style="left:161.6px;width:34.9px;top:250.91px;height:11.3px;line-height:11.3px;text-align:right;">50</div>
<div class="c" style="left:197.9px;width:54.94px;top:250.91px;height:11.3px;line-height:11.3px;text-align:right;">35</div>
<div class="c" style="left:14px;width:35.1px;top:262.21px;height:11.3px;line-height:11.3px;text-align:right;">12</div>
<div class="c" style="left:51.8px;top:262.21px;height:11.3px;line-height:11.3px;">Product 1</div>
<div class="c" style="left:108.6px;top:262.21px;height:11.3px;line-height:11.3px;">Grocery</div>
<div class="c" style="left:161.6px;width:34.9px;top:262.21px;height:11.3px;line-height:11.3px;text-align:right;">55</div>
<div class="c" style="left:197.9px;width:54.94px;top:262.21px;height:11.3px;line-height:11.3px;text-align:right;">90</div>
<div class="c" style="left:14px;width:35.1px;top:273.51px;height:11.3px;line-height:11.3px;text-align:right;">13</div>
<div class="c" style="left:51.8px;top:273.51px;height:11.3px;line-height:11.3px;">Product 1</div>
<div class="c" style="left:108.6px;top:273.51px;height:11.3px;line-height:11.3px;">Electronics</div>
<div class="c" style="left:161.6px;width:34.9px;top:273.51px;height:11.3px;line-height:11.3px;text-align:right;">60</div>
<div class="c" style="left:197.9px;width:54.94px;top:273.51px;height:11.3px;line-height:11.3px;text-align:right;">38</div>
<div class="c" style="left:14px;width:35.1px;top:284.81px;height:11.3px;line-height:11.3px;text-align:right;">14</div>
<div class="c" style="left:51.8px;top:284.81px;height:11.3px;line-height:11.3px;">Product 1</div>
<div class="c" style="left:108.6px;top:284.81px;height:11.3px;line-height:11.3px;">Clothing</div>
<div class="c" style="left:161.6px;width:34.9px;top:284.81px;height:11.3px;line-height:11.3px;text-align:right;">65</div>
<div class="c" style="left:197.9px;width:54.94px;top:284.81px;height:11.3px;line-height:11.3px;text-align:right;">40</div>
<div class="c" style="left:14px;width:35.1px;top:296.11px;height:11.3px;line-height:11.3px;text-align:right;">15</div>
<div class="c" style="left:51.8px;top:296.11px;height:11.3px;line-height:11.3px;">Product 1</div>
<div class="c" style="left:108.6px;top:296.11px;height:11.3px;line-height:11.3px;">Furniture</div>
<div class="c" style="left:161.6px;width:34.9px;top:296.11px;height:11.3px;line-height:11.3px;text-align:right;">70</div>
<div class="c" style="left:197.9px;width:54.94px;top:296.11px;height:11.3px;line-height:11.3px;text-align:right;">55</div>
<div class="c" style="left:14px;width:35.1px;top:307.41px;height:11.3px;line-height:11.3px;text-align:right;">16</div>
<div class="c" style="left:51.8px;top:307.41px;height:11.3px;line-height:11.3px;">Product 1</div>
<div class="c" style="left:108.6px;top:307.41px;height:11.3px;line-height:11.3px;">Grocery</div>
<div class="c" style="left:161.6px;width:34.9px;top:307.41px;height:11.3px;line-height:11.3px;text-align:right;">75</div>
<div class="c" style="left:197.9px;width:54.94px;top:307.41px;height:11.3px;line-height:11.3px;text-align:right;">80</div>
<div class="c" style="left:14px;width:35.1px;top:318.71px;height:11.3px;line-height:11.3px;text-align:right;">17</div>
<div class="c" style="left:51.8px;top:318.71px;height:11.3px;line-height:11.3px;">Product 1</div>
<div class="c" style="left:108.6px;top:318.71px;height:11.3px;line-height:11.3px;">Electronics</div>
<div class="c" style="left:161.6px;width:34.9px;top:318.71px;height:11.3px;line-height:11.3px;text-align:right;">80</div>
<div class="c" style="left:197.9px;width:54.94px;top:318.71px;height:11.3px;line-height:11.3px;text-align:right;">90</div>
<div class="c" style="left:14px;width:35.1px;top:330.01px;height:11.3px;line-height:11.3px;text-align:right;">18</div>
<div class="c" style="left:51.8px;top:330.01px;height:11.3px;line-height:11.3px;">Product 1</div>
<div class="c" style="left:108.6px;top:330.01px;height:11.3px;line-height:11.3px;">Clothing</div>
<div class="c" style="left:161.6px;width:34.9px;top:330.01px;height:11.3px;line-height:11.3px;text-align:right;">85</div>
<div class="c" style="left:197.9px;width:54.94px;top:330.01px;height:11.3px;line-height:11.3px;text-align:right;">30</div>
<div class="c" style="left:14px;width:35.1px;top:341.31px;height:11.3px;line-height:11.3px;text-align:right;">19</div>
<div class="c" style="left:51.8px;top:341.31px;height:11.3px;line-height:11.3px;">Product 1</div>
<div class="c" style="left:108.6px;top:341.31px;height:11.3px;line-height:11.3px;">Furniture</div>
<div class="c" style="left:161.6px;width:34.9px;top:341.31px;height:11.3px;line-height:11.3px;text-align:right;">90</div>
<div class="c" style="left:197.9px;width:54.94px;top:341.31px;height:11.3px;line-height:11.3px;text-align:right;">65</div>
<div class="c" style="left:14px;width:35.1px;top:352.61px;height:11.3px;line-height:11.3px;text-align:right;">20</div>
<div class="c" style="left:51.8px;top:352.61px;height:11.3px;line-height:11.3px;">Product 1</div>
<div class="c" style="left:108.6px;top:352.61px;height:11.3px;line-height:11.3px;">Grocery</div>
<div class="c" style="left:161.6px;width:34.9px;top:352.61px;height:11.3px;line-height:11.3px;text-align:right;">95</div>
<div class="c" style="left:197.9px;width:54.94px;top:352.61px;height:11.3px;line-height:11.3px;text-align:right;">80</div>
<div class="a" style="left:161.1px;top:125px;width:93.84px;height:258.4px;border:1.4px solid #217346"></div>
<div class="a" style="left:253.24px;top:124.6px;width:2.4px;height:2.4px;background:#217346"></div>
<div class="a" style="left:755.3px;top:115px;width:12.7px;height:263.6px;background:#e6e6e6"></div>
<div class="a" style="left:754.8px;top:115px;width:1px;height:263.6px;background:#cacaca"></div>
<div class="a" style="left:758.2px;top:116.7px;width:7.6px;height:242.2px;background:#fff;border:1px solid #c6c6c6"></div>
<div class="a" style="left:758.2px;top:116.7px;width:7.6px;height:7.4px;background:#fff;border:1px solid #9a9a9a"></div>
<div class="a" style="left:757.8px;top:370.8px;width:8.5px;height:8.3px;background:#fff;border:1px solid #9a9a9a"></div>
<svg style="left:0;top:0" width="768" height="412"><path d="M760 121.8 L764 121.8 L762 119.6 Z" fill="#444"/><path d="M760 373.6 L764 373.6 L762 375.9 Z" fill="#444"/></svg>
<div class="a" style="left:0px;top:88px;width:768px;height:27.3px;background:#e6e6e6"></div>
<div class="a" style="left:3.1px;top:94.6px;width:57.3px;height:14.3px;background:#fff;border:1px solid #c6c6c6"></div>
<div class="a" style="left:6.5px;top:97.6px;font-size:6.9px;color:#333;line-height:8px">D1</div>
<div class="a" style="left:77.6px;top:94.6px;width:61.2px;height:14.3px;background:#fff;border:1px solid #c6c6c6"></div>
<div class="a" style="left:141.9px;top:94.6px;width:622.1px;height:14.3px;background:#fff;border:1px solid #c6c6c6"></div>
<div class="a" style="left:147.9px;top:97.6px;font-size:6.9px;color:#333;line-height:8px">Price</div>
<svg style="left:0;top:0" width="768" height="412">
<path d="M52.6 100.8 L55.8 100.8 L54.2 102.6 Z" fill="#555"/>
<g fill="#999"><circle cx="69" cy="99" r="0.5"/><circle cx="69" cy="101.4" r="0.5"/><circle cx="69" cy="103.8" r="0.5"/></g>
<path d="M86 99.6 L90 103.6 M90 99.6 L86 103.6" stroke="#b4b4b4" stroke-width="0.8"/>
<path d="M105.6 101.6 L107.6 103.6 L111 99.4" fill="none" stroke="#b4b4b4" stroke-width="0.8"/>
<text x="124.6" y="104.6" font-size="8.4" font-style="italic" fill="#444" font-family="Liberation Serif">f</text><text x="128.2" y="105.2" font-size="5.4" font-style="italic" fill="#444" font-family="Liberation Serif">x</text>
<path d="M758.4 100.4 L760.2 102.2 L762 100.4" fill="none" stroke="#555" stroke-width="0.8"/>
</svg>
<div class="a" style="left:0px;top:379px;width:768px;height:16px;background:#e6e6e6"></div>
<div class="a" style="left:0px;top:378.5px;width:768px;height:1px;background:#c6c6c6"></div>
<div class="a" style="left:56.4px;top:378.5px;width:37px;height:14.5px;background:#fff;border-left:1px solid #c6c6c6;border-right:1px solid #c6c6c6"></div>
<div class="a" style="left:56.8px;top:391.6px;width:36.2px;height:1.3px;background:#217346"></div>
<div class="a" style="left:56.8px;top:383.2px;width:36.2px;text-align:center;font-size:7.1px;font-weight:bold;color:#217346;line-height:8px">Sheet1</div>
<svg style="left:0;top:0" width="768" height="412">
<path d="M17.4 384.8 L16.2 386.3 L17.4 387.8" fill="none" stroke="#bbb" stroke-width="0.7"/>
<path d="M31.8 384.8 L33 386.3 L31.8 387.8" fill="none" stroke="#bbb" stroke-width="0.7"/>
<circle cx="116.4" cy="386.4" r="4.4" fill="none" stroke="#666" stroke-width="0.7"/>
<path d="M116.4 384 V388.8 M114 386.4 H118.8" stroke="#666" stroke-width="0.7"/>
<g fill="#aaa"><circle cx="461.7" cy="383.5" r="0.45"/><circle cx="461.7" cy="385.8" r="0.45"/><circle cx="461.7" cy="388.1" r="0.45"/></g>
</svg>
<div class="a" style="left:470.4px;top:383.1px;width:262.1px;height:7.9px;background:#fff;border:1px solid #c6c6c6"></div>
<div class="a" style="left:470.4px;top:383.1px;width:8.3px;height:7.9px;background:#fff;border:1px solid #9a9a9a"></div>
<div class="a" style="left:747.7px;top:382.7px;width:8.3px;height:8.2px;background:#fff;border:1px solid #9a9a9a"></div>
<svg style="left:0;top:0" width="768" height="412">
<path d="M475.6 385 L473.6 387 L475.6 389 Z" fill="#333"/>
<path d="M750.8 384.8 L752.8 386.8 L750.8 388.8 Z" fill="#333"/>
</svg>
<div class="a" style="left:0px;top:394.8px;width:768px;height:12.5px;background:#f3f3f3"></div>
<div class="a" style="left:0px;top:394.8px;width:768px;height:0.8px;background:#dadada"></div>
<div class="a" style="left:599.2px;top:394.8px;width:21.4px;height:12.5px;background:#c6c6c6"></div>
<div class="st" style="left:6.5px;top:397.3px">Ready</div>
<div class="st" style="left:44.8px;top:397.3px">Accessibility: Good to go</div>
<div class="st" style="left:467.9px;top:397.3px">Average: 63.075</div>
<div class="st" style="left:521.9px;top:397.3px">Count: 42</div>
<div class="st" style="left:559px;top:397.3px">Sum: 2523</div>
<div class="st" style="left:748.8px;top:397.3px">100%</div>
<svg style="left:0;top:0" width="768" height="412">
<g fill="none" stroke="#555" stroke-width="0.8">
<path d="M39.6 397.3 A3.6 3.6 0 1 0 37.6 404.2" stroke-dasharray="1.1 0.6"/>
<path d="M38.6 402.4 L40.3 404.3 L43.4 400.8" stroke-width="0.9"/>
</g>
<g fill="#555"><circle cx="37.9" cy="399.6" r="0.6"/><circle cx="40.6" cy="399.6" r="0.6"/><rect x="37.2" y="400.6" width="4.2" height="0.7"/></g>
<g fill="none" stroke="#666" stroke-width="0.6">
<path d="M606.2 397.2 H613.6 M606.2 398.9 H613.6 M606.2 400.5 H613.6 M606.2 402.1 H613.6 M606.2 403.6 H613.6 M606.4 397 V403.8 M608.2 397 V403.8 M610 397 V403.8 M611.7 397 V403.8 M613.4 397 V403.8"/>
<rect x="628.2" y="397.2" width="8.4" height="6.6" rx="0.8"/><path d="M630.4 397.2 V403.8 M634.4 397.2 V403.8 M631.8 398.6 V402.4 M633 398.6 V402.4"/>
<rect x="651" y="397.2" width="8" height="7" rx="0.6"/><path d="M653.8 397.2 V400.6 H656 V397.2"/>
</g>
<path d="M670 401.2 H673.6 M736.6 401.2 H740.2 M738.4 399.4 V403" stroke="#555" stroke-width="0.7"/>
<line x1="677" y1="401.2" x2="733.4" y2="401.2" stroke="#999" stroke-width="0.7"/>
<rect x="704.4" y="397.8" width="2.6" height="6.8" fill="#444"/>
</svg>
<div class="a" style="left:0px;top:407.3px;width:768px;height:4.7px;background:#ece8e7"></div>
<svg style="left:0;top:0" width="768" height="412"><circle cx="21" cy="411.5" r="2.6" fill="#e03030"/><rect x="560" y="408" width="18.8" height="4" fill="#fbfbfb"/><circle cx="525.6" cy="411.8" r="2" fill="#d44"/></svg>
<svg style="left:0;top:0" width="768" height="412">
<g stroke="#29b0e0" stroke-width="2" fill="none" stroke-linecap="round" stroke-linejoin="round">
<line x1="360" y1="220.6" x2="210" y2="134.2"/>
<path d="M217 133.3 L209.4 133.8 L212.2 140.6"/>
</g>
<circle cx="383.9" cy="224.7" r="29.5" fill="#24b4e2"/>
<path d="M379 215.8 H387.1 V233.2 H382.9 V219.6 H379.4 Z" fill="#0a0a0a"/>
</svg>
</body></html>
